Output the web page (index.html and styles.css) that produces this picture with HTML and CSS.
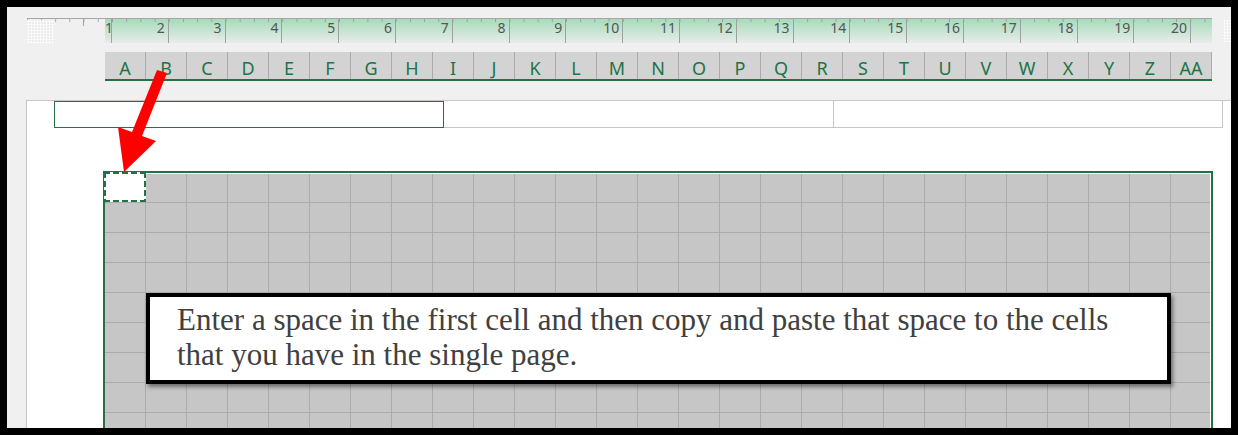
FILE: index.html
```html
<!DOCTYPE html>
<html lang="en">

<head>
    <meta charset="UTF-8">
    <meta name="viewport" content="width=device-width, initial-scale=1.0">
    <title>Page Layout - blank cells</title>
    <link rel="stylesheet" href="styles.css">
</head>

<body>
    <div class="screen">
        <div class="window">
            <!-- ruler -->
            <div class="ruler-row">
                <div class="ruler-lead">
                    <div class="hatch"></div>
                </div>
                <div class="ruler">
                    <span class="seg first">1</span>
                    <span class="seg">2</span>
                    <span class="seg">3</span>
                    <span class="seg">4</span>
                    <span class="seg">5</span>
                    <span class="seg">6</span>
                    <span class="seg">7</span>
                    <span class="seg">8</span>
                    <span class="seg">9</span>
                    <span class="seg">10</span>
                    <span class="seg">11</span>
                    <span class="seg">12</span>
                    <span class="seg">13</span>
                    <span class="seg">14</span>
                    <span class="seg">15</span>
                    <span class="seg">16</span>
                    <span class="seg">17</span>
                    <span class="seg">18</span>
                    <span class="seg">19</span>
                    <span class="seg">20</span>
                    <span class="seg last"></span>
                </div>
                <div class="hatch end"></div>
            </div>

            <!-- column headings -->
            <div class="col-heads">
                <div class="ch">A</div>
                <div class="ch">B</div>
                <div class="ch">C</div>
                <div class="ch">D</div>
                <div class="ch">E</div>
                <div class="ch">F</div>
                <div class="ch">G</div>
                <div class="ch">H</div>
                <div class="ch">I</div>
                <div class="ch">J</div>
                <div class="ch">K</div>
                <div class="ch">L</div>
                <div class="ch">M</div>
                <div class="ch">N</div>
                <div class="ch">O</div>
                <div class="ch">P</div>
                <div class="ch">Q</div>
                <div class="ch">R</div>
                <div class="ch">S</div>
                <div class="ch">T</div>
                <div class="ch">U</div>
                <div class="ch">V</div>
                <div class="ch">W</div>
                <div class="ch">X</div>
                <div class="ch">Y</div>
                <div class="ch">Z</div>
                <div class="ch">AA</div>
            </div>

            <!-- sheet page -->
            <div class="page">
                <div class="fields">
                    <div class="field active"></div>
                    <div class="field"></div>
                    <div class="field"></div>
                </div>
                <div class="grid">
                    <div class="first-cell"></div>
                    <div class="callout">
                        Enter a space in the first cell and then copy and paste that space to the cells<br>
                        that you have in the single page.
                    </div>
                </div>
            </div>
        </div>

        <svg class="arrow" width="1238" height="435" viewBox="0 0 1238 435">
            <polygon points="157,70 167,73 142,136 156,141 124,172 118,127 132,132" fill="#ff0000"></polygon>
        </svg>
    </div>
</body>

</html>
```

FILE: styles.css
```css
body {
    margin: 0;
    background: #000;
}

.screen {
    position: relative;
    width: 1238px;
    height: 435px;
    padding: 7px;
    box-sizing: border-box;
    background: #000;
    overflow: hidden;
}

.window {
    height: 100%;
    background: #f0f0f0;
    overflow: hidden;
    display: flex;
    flex-direction: column;
}

/* ruler */
.ruler-row {
    display: flex;
    height: 25px;
    margin-top: 11px;
    padding-left: 20px;
}

.ruler-lead {
    position: relative;
    width: 78px;
    border-top: 1px solid #a6a6a6;
    background: linear-gradient(to right, #a6a6a6 1px, transparent 1px) 14px 0 / 14.2px 3px repeat-x;
}

.ruler-lead::after {
    content: "";
    position: absolute;
    left: 56px;
    top: 0;
    width: 1px;
    height: 7px;
    background: #a6a6a6;
}

.hatch {
    width: 27px;
    height: 23px;
    margin-top: 1px;
    background: radial-gradient(circle, #ffffff 0.9px, transparent 1.2px) 0 0 / 3px 3px, #ececec;
}

.hatch.end {
    flex: 1;
    width: auto;
    margin-left: 11px;
}

.ruler {
    display: flex;
    width: 1107px;
    border-top: 1px solid #a6a6a6;
    background:
        linear-gradient(to right, #9c9c9c 1px, transparent 1px) 7px 0 / 14.2px 3px repeat-x,
        linear-gradient(to bottom, #a6dbba, #e9ecea);
    font-family: "Noto Sans", sans-serif;
    font-size: 14px;
    color: #555;
}

.seg {
    width: 56.8px;
    flex: none;
    box-sizing: border-box;
    border-right: 1px solid #a0a0a0;
    text-align: right;
    padding-right: 3px;
    line-height: 18px;
}

.seg.first {
    width: 7px;
    padding-right: 0;
    text-align: left;
}

.seg.last {
    flex: 1;
    border-right: none;
}

/* column headings */
.col-heads {
    display: flex;
    margin: 9px 0 0 98px;
    height: 29px;
    width: 1107px;
    box-sizing: border-box;
    border-bottom: 2px solid #217346;
}

.ch {
    width: 41px;
    box-sizing: border-box;
    border-right: 1px solid #ababab;
    background: #d3d3d3;
    color: #217346;
    font-family: "Noto Sans", sans-serif;
    font-size: 18px;
    text-align: center;
    padding-top: 6px;
    line-height: 21px;
}

/* page */
.page {
    flex: 1;
    margin: 19px 0 0 19px;
    background: #fff;
    border-top: 1px solid #c6c6c6;
    border-left: 1px solid #c6c6c6;
}

.fields {
    display: flex;
    height: 27px;
    margin-left: 27px;
}

.field {
    width: 390px;
    box-sizing: border-box;
    border-right: 1px solid #c6c6c6;
    border-bottom: 1px solid #c6c6c6;
}

.field.active {
    border: 1px solid #217346;
}

.field:last-child {
    width: 389px;
}

.grid {
    position: relative;
    width: 1110px;
    height: 300px;
    margin: 43px 0 0 76px;
    box-sizing: border-box;
    border: 2px solid #217346;
    box-shadow: inset -1px 1px 0 #fff;
    background:
        linear-gradient(to right, #ababab 1px, transparent 1px) 40px 0 / 41px 30px,
        linear-gradient(to bottom, #ababab 1px, transparent 1px) 0 29px / 41px 30px,
        #c6c6c6;
}

.first-cell {
    position: absolute;
    left: -1px;
    top: -1px;
    width: 42px;
    height: 30px;
    background:
        repeating-linear-gradient(to right, #217346 0 6px, #fff 6px 9px) top left / 100% 2px no-repeat,
        repeating-linear-gradient(to right, #217346 0 6px, #fff 6px 9px) bottom left / 100% 2px no-repeat,
        repeating-linear-gradient(to bottom, #217346 0 6px, #fff 6px 9px) top left / 2px 100% no-repeat,
        repeating-linear-gradient(to bottom, #217346 0 6px, #fff 6px 9px) top right / 2px 100% no-repeat,
        #fff;
}

.callout {
    position: absolute;
    left: 41px;
    top: 120px;
    width: 1025px;
    height: 91px;
    box-sizing: border-box;
    border: 4px solid #000;
    background: #fff;
    box-shadow: 2px 3px 4px rgba(0, 0, 0, 0.45);
    padding: 5px 0 0 27px;
    font-family: "Liberation Serif", serif;
    font-size: 31px;
    line-height: 35px;
    color: #404040;
}

.arrow {
    position: absolute;
    left: 0;
    top: 0;
    pointer-events: none;
}
```
